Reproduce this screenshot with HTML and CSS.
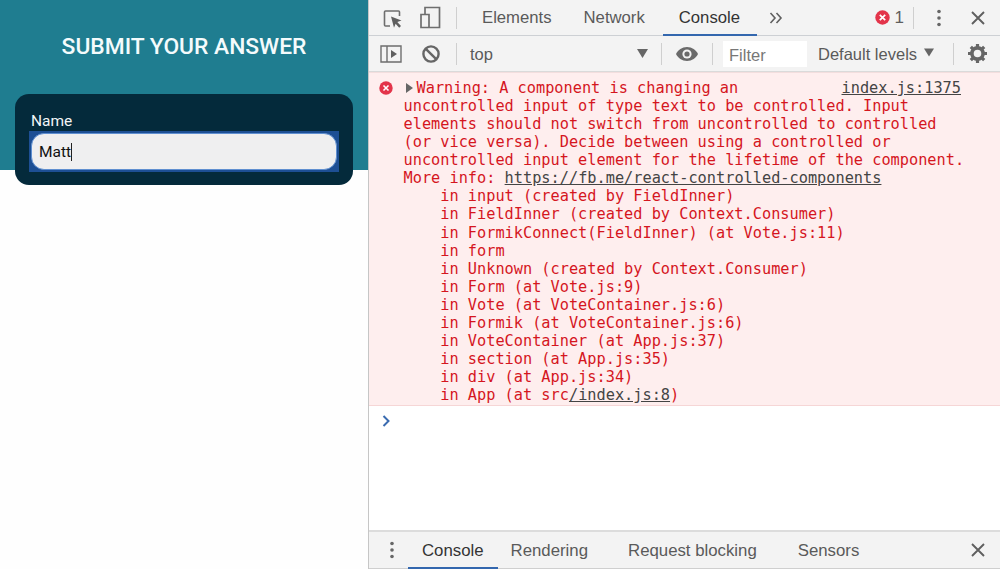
FILE: index.html
```html
<!DOCTYPE html>
<html lang="en">
<head>
<meta charset="utf-8">
<title>Submit your answer</title>
<link rel="stylesheet" href="styles.css">
</head>
<body>
<div class="app">
  <section class="vote">
    <h1 class="vote-title">SUBMIT YOUR ANSWER</h1>
    <form class="card">
      <div class="field-label">Name</div>
      <div class="focus-ring">
        <div class="field"><span>Matt</span><i class="caret"></i></div>
      </div>
    </form>
  </section>
  <section class="devtools">
    <div class="bar top-bar">
      <svg class="ico inspect" width="22" height="22" viewBox="0 0 22 22"><path d="M8 18H3.5a1 1 0 0 1-1-1V4a1 1 0 0 1 1-1h13a1 1 0 0 1 1 1v4" fill="none" stroke="#6e6e6e" stroke-width="1.6"/><path d="M9 8.5l10.5 4-4.2 1.6 3.7 4-1.8 1.6-3.6-4-1.6 4z" fill="#5f5f5f"/></svg>
      <svg class="ico device" width="24" height="24" viewBox="0 0 24 24"><path d="M7 9V2.5h14.5v20H3V9.5h8v13" fill="none" stroke="#6e6e6e" stroke-width="1.7"/></svg>
      <span class="sep sep-a"></span>
      <span class="tab tab-elements">Elements</span>
      <span class="tab tab-network">Network</span>
      <span class="tab tab-console">Console</span>
      <svg class="chev" width="14" height="12" viewBox="0 0 14 12"><path d="M1.5 1l4.5 5-4.5 5M7.5 1l4.5 5-4.5 5" fill="none" stroke="#5f5f5f" stroke-width="1.6"/></svg>
      <span class="grow"></span>
      <svg class="err-ico" width="15" height="15" viewBox="0 0 15 15"><circle cx="7.5" cy="7.5" r="7.2" fill="#e3344a"/><path d="M4.8 4.8l5.4 5.4M10.2 4.8l-5.4 5.4" stroke="#fff" stroke-width="1.7"/></svg>
      <span class="err-count">1</span>
      <span class="sep sep-b"></span>
      <svg class="dots" width="4" height="18" viewBox="0 0 4 18"><circle cx="2" cy="2.5" r="1.8" fill="#666"/><circle cx="2" cy="9" r="1.8" fill="#666"/><circle cx="2" cy="15.5" r="1.8" fill="#666"/></svg>
      <svg class="close close-top" width="14" height="14" viewBox="0 0 14 14"><path d="M1 1l12 12M13 1L1 13" stroke="#5f5f5f" stroke-width="1.9"/></svg>
    </div>
    <div class="bar filter-bar">
      <svg class="ico sidebar" width="22" height="18" viewBox="0 0 22 18"><path d="M1 1h20v16H1zM7 1v16" fill="none" stroke="#6e6e6e" stroke-width="1.4"/><path d="M11 5l6 4-6 4z" fill="#5f5f5f"/></svg>
      <svg class="ico clear" width="20" height="20" viewBox="0 0 20 20"><circle cx="10" cy="10" r="7.6" fill="none" stroke="#666" stroke-width="2.4"/><path d="M4.6 4.6l10.8 10.8" stroke="#666" stroke-width="2.4"/></svg>
      <span class="sep sep-c"></span>
      <span class="context">top</span>
      <svg class="tri tri-context" width="11" height="9" viewBox="0 0 11 9"><path d="M0 0h11L5.5 9z" fill="#666"/></svg>
      <span class="sep sep-d"></span>
      <svg class="eye" width="24" height="16" viewBox="0 0 24 16"><path d="M12 1C7 1 3 4 1 8c2 4 6 7 11 7s9-3 11-7c-2-4-6-7-11-7z" fill="#6a6a6a"/><circle cx="12" cy="8" r="4.6" fill="#f3f3f3"/><circle cx="12" cy="8" r="2.6" fill="#6a6a6a"/></svg>
      <span class="sep sep-e"></span>
      <span class="filter">Filter</span>
      <span class="levels">Default levels</span>
      <svg class="tri tri-levels" width="10" height="9" viewBox="0 0 11 9"><path d="M0 0h11L5.5 9z" fill="#666"/></svg>
      <span class="grow"></span>
      <span class="sep sep-f"></span>
      <svg class="gear" width="21" height="21" viewBox="0 0 21 21"><circle cx="10.5" cy="10.5" r="5.6" fill="none" stroke="#666" stroke-width="3.6"/><path d="M10.5 1v19M1 10.5h19M3.8 3.8l13.4 13.4M17.2 3.8L3.8 17.2" stroke="#666" stroke-width="3.2" stroke-dasharray="3.4 12.2"/></svg>
    </div>
    <div class="console">
      <div class="message">
        <svg class="msg-err" width="14" height="14" viewBox="0 0 15 15"><circle cx="7.5" cy="7.5" r="7.2" fill="#e3344a"/><path d="M4.8 4.8l5.4 5.4M10.2 4.8l-5.4 5.4" stroke="#fff" stroke-width="1.7"/></svg>
        <div class="msg-body">
          <a class="msg-src">index.js:1375</a>
          <pre class="msg-text"><svg class="expand" width="9" height="10" viewBox="0 0 9 10"><path d="M1 0l7 5-7 5z" fill="#666"/></svg>Warning: A component is changing an
uncontrolled input of type text to be controlled. Input
elements should not switch from uncontrolled to controlled
(or vice versa). Decide between using a controlled or
uncontrolled input element for the lifetime of the component.
More info: <a class="link">https://fb.me/react-controlled-components</a>
    in input (created by FieldInner)
    in FieldInner (created by Context.Consumer)
    in FormikConnect(FieldInner) (at Vote.js:11)
    in form
    in Unknown (created by Context.Consumer)
    in Form (at Vote.js:9)
    in Vote (at VoteContainer.js:6)
    in Formik (at VoteContainer.js:6)
    in VoteContainer (at App.js:37)
    in section (at App.js:35)
    in div (at App.js:34)
    in App (at src<a class="link">/index.js:8</a>)</pre>
        </div>
      </div>
      <div class="prompt"><svg width="9" height="12" viewBox="0 0 9 12"><path d="M1.5 1l5 5-5 5" fill="none" stroke="#3a6bb0" stroke-width="2"/></svg></div>
    </div>
    <div class="bar drawer">
      <svg class="dots drawer-dots" width="4" height="18" viewBox="0 0 4 18"><circle cx="2" cy="2.5" r="1.8" fill="#666"/><circle cx="2" cy="9" r="1.8" fill="#666"/><circle cx="2" cy="15.5" r="1.8" fill="#666"/></svg>
      <span class="tab drawer-tab drawer-console">Console</span>
      <span class="tab drawer-tab drawer-rendering">Rendering</span>
      <span class="tab drawer-tab drawer-request">Request blocking</span>
      <span class="tab drawer-tab drawer-sensors">Sensors</span>
      <span class="grow"></span>
      <svg class="close close-drawer" width="14" height="14" viewBox="0 0 14 14"><path d="M1 1l12 12M13 1L1 13" stroke="#5f5f5f" stroke-width="1.9"/></svg>
    </div>
  </section>
</div>
</body>
</html>
```
FILE: styles.css
```css
* { box-sizing: border-box; }
html, body { margin: 0; height: 100%; overflow: hidden; background: #fff; }
.app { display: flex; width: 1000px; height: 569px; }

.vote {
  width: 368px;
  flex: none;
  padding: 0 15px;
  background: linear-gradient(#1f7d90 170px, #fefefe 170px);
}
.vote-title {
  margin: 0;
  padding-top: 33px;
  height: 94px;
  text-align: center;
  font: 500 22.8px/28px Roboto, sans-serif;
  color: #f4fbfc;
}
.card {
  height: 91px;
  padding: 18px 15px 0;
  border-radius: 14px;
  background: #042a3b;
}
.field-label {
  height: 19px;
  padding-left: 1px;
  font: 400 15.5px/18px Roboto, sans-serif;
  color: #f2f5f6;
}
.focus-ring {
  height: 41px;
  margin: 0 -1px;
  border: 2px solid #1d4f94;
  background: #1d4f94;
}
.field {
  display: flex;
  align-items: center;
  height: 37px;
  padding-left: 7px;
  border: 1px solid #5f8fd0;
  border-radius: 13px;
  background: #efeff0;
  font: 400 15.5px/20px Roboto, sans-serif;
  color: #111;
}
.caret { width: 1px; height: 18px; background: #222; }

.devtools {
  flex: 1;
  display: flex;
  flex-direction: column;
  border-left: 1px solid #c6c6c6;
  font-family: "Liberation Sans", Arial, sans-serif;
  min-width: 0;
}
.bar { display: flex; align-items: center; flex: none; background: #f3f3f3; }
.top-bar { height: 36px; border-bottom: 1px solid #cdd0d4; }
.filter-bar { height: 36px; border-bottom: 1px solid #dadada; }
.grow { flex: 1; }
.ico, .chev, .dots, .close, .tri, .eye, .gear, .err-ico { flex: none; display: block; }
.sep { flex: none; width: 1px; height: 22px; background: #cfcfcf; }

.inspect { margin-left: 13px; margin-top: 2px; }
.device { margin-left: 14px; margin-top: -1px; }
.sep-a { margin-left: 14px; }
.tab { font-size: 16.7px; color: #5a5a5a; white-space: nowrap; }
.tab-elements { margin-left: 25px; }
.tab-network { margin-left: 32px; }
.tab-console {
  margin-left: 34px;
  align-self: stretch;
  display: flex;
  align-items: center;
  color: #333;
  position: relative;
}
.tab-console::after {
  content: "";
  position: absolute;
  left: -16px;
  right: -17px;
  bottom: -1px;
  height: 2px;
  background: #3367ae;
}
.chev { margin-left: 29px; }
.err-ico { margin-right: 5px; }
.err-count { font-size: 17px; color: #5f5f5f; }
.sep-b { margin-left: 9px; }
.top-bar .dots { margin-left: 23px; }
.close-top { margin-left: 30px; margin-right: 15px; }

.sidebar { margin-left: 11px; }
.clear { margin-left: 19px; }
.sep-c { margin-left: 15px; }
.context { margin-left: 13px; padding-top: 1px; font-size: 16.5px; color: #5a5a5a; width: 167px; }
.sep-d { margin-left: 13px; }
.eye { margin-left: 13px; }
.sep-e { margin-left: 13px; }
.filter {
  margin-left: 10px;
  width: 84px;
  height: 26px;
  padding: 0 6px;
  background: #fff;
  font-size: 16.5px;
  line-height: 28px;
  color: #777;
}
.levels { margin-left: 11px; padding-top: 1px; font-size: 16.5px; color: #5a5a5a; }
.tri-levels { margin-left: 7px; margin-top: -2px; }
.sep-f { margin-right: 13px; }
.gear { margin-right: 12px; }

.console { flex: 1; display: flex; flex-direction: column; background: #fff; min-height: 0; }
.message {
  display: flex;
  height: 334px;
  padding: 6px 0 0 10px;
  background: #feeeee;
  border-top: 1px solid #f3dede;
  border-bottom: 1px solid #f6d6d6;
  color: #d5161e;
}
.msg-err { flex: none; margin-top: 2px; }
.msg-body { flex: 1; padding-left: 10.5px; padding-right: 40px; min-width: 0; }
.msg-src {
  float: right;
  font: 15.27px/18.06px "DejaVu Sans Mono", monospace;
  color: #444;
  text-decoration: underline;
  margin-right: -1px;
}
.msg-text {
  margin: 0;
  font: 15.27px/18.06px "DejaVu Sans Mono", monospace;
  white-space: pre;
}
.expand { margin: 0 3px 0 1px; display: inline-block; }
.link { color: #444; text-decoration: underline; }
.prompt { padding: 9px 0 0 13px; }
.prompt svg { display: block; }

.drawer { height: 39px; border-top: 2px solid #dcdcdc; border-bottom: 1px solid #cfcfcf; }
.drawer-dots { margin-left: 21px; }
.drawer-tab { font-size: 16.8px; padding-top: 1px; }
.drawer-console {
  margin-left: 28px;
  align-self: stretch;
  display: flex;
  align-items: center;
  color: #333;
  position: relative;
}
.drawer-console::after {
  content: "";
  position: absolute;
  left: -14px;
  right: -14px;
  bottom: -1px;
  height: 2px;
  background: #3367ae;
}
.drawer-rendering { margin-left: 27px; }
.drawer-request { margin-left: 40px; }
.drawer-sensors { margin-left: 41px; }
.close-drawer { margin-right: 15px; }
```
